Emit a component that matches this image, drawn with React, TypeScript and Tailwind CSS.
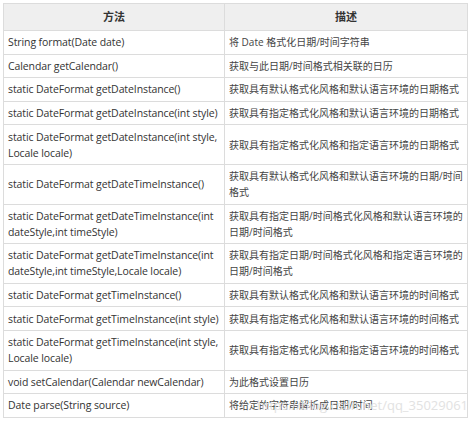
import React from "react";

// each cell is a list of lines, broken where the reference breaks them
const rows: [string[], string[]][] = [
  [["String format(Date date)"], ["将 Date 格式化日期/时间字符串"]],
  [["Calendar getCalendar()"], ["获取与此日期/时间格式相关联的日历"]],
  [["static DateFormat getDateInstance()"], ["获取具有默认格式化风格和默认语言环境的日期格式"]],
  [["static DateFormat getDateInstance(int style)"], ["获取具有指定格式化风格和默认语言环境的日期格式"]],
  [["static DateFormat getDateInstance(int style,", "Locale locale)"], ["获取具有指定格式化风格和指定语言环境的日期格式"]],
  [["static DateFormat getDateTimeInstance()"], ["获取具有默认格式化风格和默认语言环境的日期/时间", "格式"]],
  [["static DateFormat getDateTimeInstance(int", "dateStyle,int timeStyle)"], ["获取具有指定日期/时间格式化风格和默认语言环境的", "日期/时间格式"]],
  [["static DateFormat getDateTimeInstance(int", "dateStyle,int timeStyle,Locale locale)"], ["获取具有指定日期/时间格式化风格和指定语言环境的", "日期/时间格式"]],
  [["static DateFormat getTimeInstance()"], ["获取具有默认格式化风格和默认语言环境的时间格式"]],
  [["static DateFormat getTimeInstance(int style)"], ["获取具有指定格式化风格和默认语言环境的时间格式"]],
  [["static DateFormat getTimeInstance(int style,", "Locale locale)"], ["获取具有指定格式化风格和指定语言环境的时间格式"]],
  [["void setCalendar(Calendar newCalendar)"], ["为此格式设置日历"]],
  [["Date parse(String source)"], ["将给定的字符串解析成日期/时间"]],
];

export default function App() {
  return (
    <div
      className="relative w-[474px] h-[422px] overflow-hidden bg-white pt-[3px] pl-[3px] text-[#333]"
      style={{ fontFamily: '"Open Sans", "Noto Sans CJK SC", sans-serif' }}
    >
      <table className="border-collapse table-fixed w-[464px]">
        <colgroup>
          <col className="w-[221px]" />
          <col className="w-[243px]" />
        </colgroup>
        <thead>
          <tr className="bg-[#efefef]">
            <th className="border border-[#dcdcdc] h-[27px] text-[11px] font-bold text-center">方法</th>
            <th className="border border-[#dcdcdc] h-[27px] text-[11px] font-bold text-center">描述</th>
          </tr>
        </thead>
        <tbody>
          {rows.map(([method, desc], i) => (
            <tr key={i}>
              <td className="border border-[#dcdcdc] px-[4px] py-[3.3px] text-[10.5px] leading-[16px] tracking-[-0.1px] whitespace-nowrap overflow-hidden align-middle">
                {method.map((line, j) => (
                  <div key={j}>{line}</div>
                ))}
              </td>
              <td className="border border-[#dcdcdc] px-[4px] py-[3.3px] text-[10px] leading-[16px] whitespace-nowrap overflow-hidden align-middle text-[#444]">
                {desc.map((line, j) => (
                  <div key={j}>{line}</div>
                ))}
              </td>
            </tr>
          ))}
        </tbody>
      </table>
      {/* watermark */}
      <div className="absolute right-[6px] top-[396px] text-[13px] text-[#e2e2e2] pointer-events-none">
        https://blog.csdn.net/qq_35029061
      </div>
    </div>
  );
}
